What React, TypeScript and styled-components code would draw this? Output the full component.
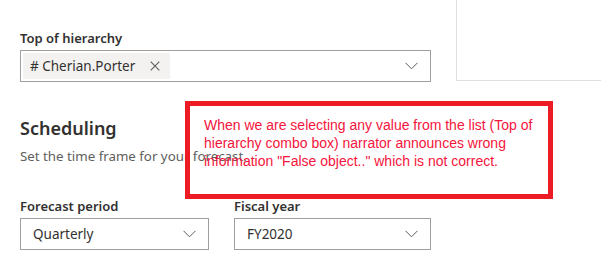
import styled, { createGlobalStyle } from 'styled-components';

const GlobalStyle = createGlobalStyle`
  html, body {
    margin: 0;
    padding: 0;
    background: #ffffff;
  }
  body {
    font-family: 'Noto Sans', 'Open Sans', sans-serif;
    color: #323130;
  }
`;

const Page = styled.div`
  position: relative;
  display: flex;
  flex-direction: row;
  width: 601px;
  height: 261px;
  overflow: hidden;
`;

const Main = styled.div`
  display: flex;
  flex-direction: column;
  width: 411px;
  padding: 29px 0 0 20px;
`;

const SidePanel = styled.div`
  margin-left: 25px;
  width: 150px;
  height: 81px;
  border-left: 1px solid #e1dfdd;
  border-bottom: 1px solid #e1dfdd;
  box-sizing: border-box;
`;

const Label = styled.div`
  font-size: 13px;
  font-weight: 600;
  line-height: 18px;
  color: #323130;
  margin-bottom: 3px;
`;

const Combo = styled.div<{ $width?: number }>`
  display: flex;
  align-items: center;
  box-sizing: border-box;
  width: ${(p) => (p.$width ? `${p.$width}px` : '100%')};
  height: 32px;
  border: 1px solid #a19f9d;
  padding: 0 12px 0 2px;
`;

const Chip = styled.div`
  display: flex;
  align-items: center;
  height: 26px;
  background: #f3f2f1;
  padding: 0 10px 0 7px;
  font-size: 13.5px;
  color: #323130;
  gap: 15px;
`;

const Value = styled.span`
  flex: 1;
  font-size: 13.5px;
  color: #323130;
  padding-left: 10px;
`;

const Spacer = styled.span`
  flex: 1;
`;

const Heading = styled.h2`
  margin: 33px 0 0;
  font-size: 18px;
  font-weight: 600;
  line-height: 26px;
  color: #323130;
`;

const Description = styled.p`
  margin: 5px 0 0;
  font-size: 13.3px;
  line-height: 21px;
  color: #605e5c;
`;

const FieldRow = styled.div`
  display: flex;
  gap: 25px;
  margin-top: 30px;
`;

const Field = styled.div`
  display: flex;
  flex-direction: column;
`;

const Annotation = styled.div`
  position: absolute;
  left: 185px;
  top: 101px;
  width: 368px;
  height: 98px;
  box-sizing: border-box;
  border: 5px solid #ed1c24;
  padding: 10px 6px 0 14px;
  font-family: 'Liberation Sans', Arial, sans-serif;
  font-size: 14px;
  line-height: 18px;
  color: #f5143c;
`;

const Chevron = () => (
  <svg width="13" height="8" viewBox="0 0 13 8" fill="none">
    <path d="M0.5 0.8 L6.5 6.8 L12.5 0.8" stroke="#605e5c" strokeWidth="1" />
  </svg>
);

const Cross = () => (
  <svg width="10" height="10" viewBox="0 0 10 10" fill="none">
    <path d="M0.7 0.7 L9.3 9.3 M9.3 0.7 L0.7 9.3" stroke="#605e5c" strokeWidth="1.1" />
  </svg>
);

export default function App() {
  return (
    <Page>
      <GlobalStyle />
      <Main>
        <Label>Top of hierarchy</Label>
        <Combo>
          <Chip>
            <span># Cherian.Porter</span>
            <Cross />
          </Chip>
          <Spacer />
          <Chevron />
        </Combo>

        <Heading>Scheduling</Heading>
        <Description>Set the time frame for your forecast.</Description>

        <FieldRow>
          <Field>
            <Label>Forecast period</Label>
            <Combo $width={189}>
              <Value>Quarterly</Value>
              <Chevron />
            </Combo>
          </Field>
          <Field>
            <Label>Fiscal year</Label>
            <Combo $width={197}>
              <Value>FY2020</Value>
              <Chevron />
            </Combo>
          </Field>
        </FieldRow>
      </Main>
      <SidePanel />

      <Annotation>
        When we are selecting any value from the list (Top of hierarchy combo box) narrator announces wrong
        information "False object.." which is not correct.
      </Annotation>
    </Page>
  );
}
